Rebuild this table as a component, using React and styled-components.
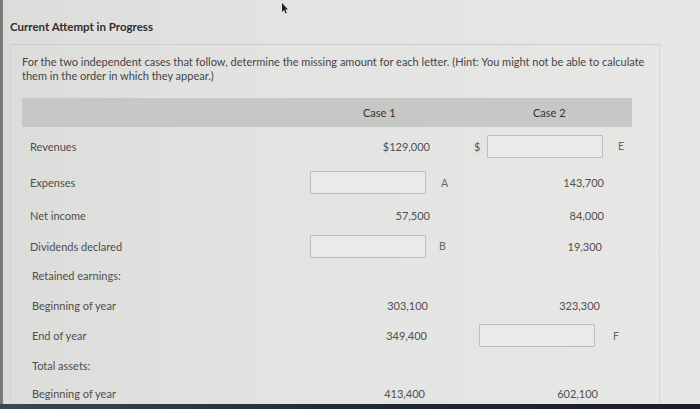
import React from "react";
import styled, { createGlobalStyle } from "styled-components";

const Global = createGlobalStyle`
  html, body { margin: 0; padding: 0; }
  body {
    width: 700px; height: 409px; overflow: hidden;
    background: #e2e2e0;
    font-family: Lato, "Open Sans", "Liberation Sans", sans-serif;
  }
`;

const Page = styled.div`
  position: relative;
  width: 700px;
  height: 409px;
  display: flex;
  flex-direction: column;
  background: linear-gradient(90deg, #dcdcda 0%, #e3e3e1 40%, #e7e7e5 100%);
`;

const Screen = styled.div`
  flex: 1;
  min-height: 0;
  overflow: hidden;
  border-left: 3px solid #7a7a78;
  padding-left: 7px;
  display: flex;
  flex-direction: column;
`;

const Title = styled.div`
  flex-shrink: 0;
  height: 44px;
  box-sizing: border-box;
  padding-top: 19px;
  font-size: 11.5px;
  font-weight: 700;
  color: #2e2e2e;
  line-height: 16px;
`;

const Panel = styled.div`
  width: 650px;
  flex: 1 0 auto;
  box-sizing: border-box;
  border-top: 1px solid #cdcdcb;
  border-left: 1px solid #d3d3d1;
  border-right: 1px solid #d8d8d6;
  padding: 10px 0 0 11px;
`;

const Hint = styled.p`
  margin: 0;
  font-size: 11px;
  line-height: 14px;
  color: #454545;
  width: 625px;
`;

const Table = styled.div`
  margin-top: 15px;
  width: 610px;
`;

const HeaderBand = styled.div`
  height: 29px;
  background: #c7c7c5;
  display: grid;
  grid-template-columns: 288px 120px 52px 117px 1fr;
  align-items: center;
  font-size: 11px;
  color: #333;
`;

const HeadCell = styled.div`
  grid-column: ${(p) => p.$col};
  text-align: left;
  padding-left: ${(p) => p.$pad || 0}px;
`;

const Row = styled.div`
  height: ${(p) => p.$h}px;
  display: grid;
  grid-template-columns: 288px 120px 44px 13px 117px 1fr;
  align-items: center;
  font-size: 11px;
  color: #555;
`;

const Label = styled.div`
  padding-left: ${(p) => (p.$indent ? 10 : 8)}px;
  color: #4e4e4e;
`;

const Num = styled.div`
  text-align: right;
  padding-right: ${(p) => p.$pr || 0}px;
  color: #505050;
`;

const Box = styled.div`
  height: 23px;
  width: 116px;
  margin-left: ${(p) => p.$shift || 0}px;
  box-sizing: border-box;
  border: 1px solid #bdbdbb;
  background: #eaeae8;
  border-radius: 1px;
`;

const Letter = styled.div`
  padding-left: ${(p) => p.$pl || 0}px;
  color: #666;
  font-size: 10.5px;
`;

const Dollar = styled.div`
  color: #555;
  font-size: 11px;
`;

const BottomBar = styled.div`
  flex-shrink: 0;
  height: 5px;
  background: linear-gradient(90deg, #3b4656, #222a36 50%, #1a1e24);
`;

const Cursor = styled.svg`
  position: absolute;
  left: 281px;
  top: 3px;
`;

export default function App() {
  return (
    <Page>
      <Global />
      <Screen>
        <Title>Current Attempt in Progress</Title>
        <Panel>
          <Hint>
            For the two independent cases that follow, determine the missing amount for each letter. (Hint: You might not be able to calculate them in the order in which they appear.)
          </Hint>
          <Table>
            <HeaderBand>
              <HeadCell $col={2} $pad={53}>Case 1</HeadCell>
              <HeadCell $col={4} $pad={51}>Case 2</HeadCell>
            </HeaderBand>

            <Row $h={38}>
              <Label>Revenues</Label>
              <Num>$129,000</Num>
              <div />
              <Dollar>$</Dollar>
              <Box />
              <Letter $pl={14}>E</Letter>
            </Row>

            <Row $h={35}>
              <Label>Expenses</Label>
              <Box />
              <Letter $pl={11}>A</Letter>
              <div />
              <Num>143,700</Num>
              <div />
            </Row>

            <Row $h={31}>
              <Label>Net income</Label>
              <Num>57,500</Num>
              <div />
              <div />
              <Num>84,000</Num>
              <div />
            </Row>

            <Row $h={30}>
              <Label>Dividends declared</Label>
              <Box />
              <Letter $pl={9}>B</Letter>
              <div />
              <Num $pr={2}>19,300</Num>
              <div />
            </Row>

            <Row $h={29}>
              <Label $indent>Retained earnings:</Label>
            </Row>

            <Row $h={30}>
              <Label $indent>Beginning of year</Label>
              <Num $pr={2}>303,100</Num>
              <div />
              <div />
              <Num $pr={4}>323,300</Num>
              <div />
            </Row>

            <Row $h={31}>
              <Label $indent>End of year</Label>
              <Num $pr={3}>349,400</Num>
              <div />
              <div />
              <Box $shift={-8} />
              <Letter $pl={9}>F</Letter>
            </Row>

            <Row $h={28}>
              <Label $indent>Total assets:</Label>
            </Row>

            <Row $h={29}>
              <Label $indent>Beginning of year</Label>
              <Num $pr={5}>413,400</Num>
              <div />
              <div />
              <Num $pr={6}>602,100</Num>
              <div />
            </Row>
          </Table>
        </Panel>
      </Screen>
      <BottomBar />
      <Cursor width="8" height="12" viewBox="0 0 8 12">
        <path d="M1 0 L1 9 L3 7 L4.6 10.5 L5.8 10 L4.3 6.6 L7 6.6 Z" fill="#222" />
      </Cursor>
    </Page>
  );
}
